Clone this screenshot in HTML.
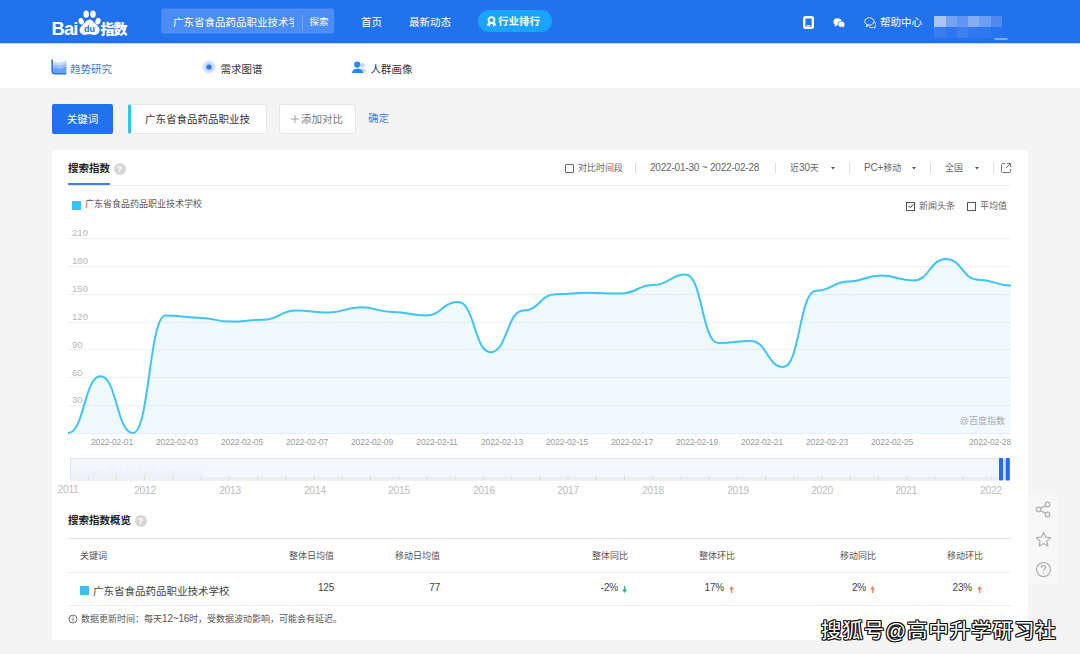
<!DOCTYPE html>
<html lang="zh-CN">
<head>
<meta charset="utf-8">
<title>百度指数</title>
<style>
*{box-sizing:border-box;margin:0;padding:0}
html,body{width:1080px;height:654px;overflow:hidden}
body{background:#f4f4f4;font-family:"Liberation Sans","Noto Sans CJK SC",sans-serif;font-size:12px;color:#333;position:relative}
.abs{position:absolute;white-space:nowrap}
#hdr{position:absolute;left:0;top:0;width:1080px;height:43px;background:#2272f0}
#sub{position:absolute;left:0;top:43px;width:1080px;height:45px;background:#fff}
.w{color:#fff}
#search{position:absolute;left:161px;top:8px;width:172px;height:25px;background:#4b8df4;border-radius:3px}
#card{position:absolute;left:52px;top:150px;width:975.500px;height:490px;background:#fff}
.t11{font-size:10.5px}
.t10{font-size:9px}
.l{font-size:10px;letter-spacing:-0.2px}
.g9{color:#999}
.g6{color:#666}
</style>
</head>
<body>
<div id="hdr">
  <div class="abs w" style="left:51.5px;top:17.5px;font-size:18.3px;font-weight:bold;letter-spacing:-0.75px;line-height:22px">Bai</div>
  <svg class="abs" style="left:77px;top:9px" width="25" height="27" viewBox="0 0 25 27">
    <ellipse cx="4.2" cy="12.2" rx="2.6" ry="3.4" fill="#fff" transform="rotate(-15 4.2 12.2)"/>
    <ellipse cx="9.2" cy="5.2" rx="2.7" ry="3.6" fill="#fff"/>
    <ellipse cx="16" cy="5.2" rx="2.7" ry="3.6" fill="#fff"/>
    <ellipse cx="21" cy="12.2" rx="2.6" ry="3.4" fill="#fff" transform="rotate(15 21 12.2)"/>
    <path d="M12.6 10.5c-2.6 0-4 2.6-6 4.6-2 2-4 3-4 6 0 3 2.400 4.800 5 4.800 2 0 3.200-.6 5-.6s3 .6 5 .6c2.600 0 5-1.800 5-4.800 0-3-2-4-4-6-2-2-3.400-4.600-6-4.600z" fill="#fff"/>
    <text x="12.600" y="23" font-size="9" font-weight="bold" fill="#2272f0" text-anchor="middle" font-family="Liberation Sans, sans-serif">du</text>
  </svg>
  <div class="abs w" style="left:100.5px;top:19.5px;font-size:14px;font-weight:900;letter-spacing:-1px;line-height:18px">指数</div>

  <svg class="abs" style="left:0;top:0" width="400" height="43"><rect x="161.200" y="8.400" width="173" height="25.300" rx="3" fill="#4b8df4"/></svg>
  <div class="abs w" style="left:173px;top:13.500px;width:121px;overflow:hidden;line-height:16px;font-size:10.5px">广东省食品药品职业技术学校</div>
  <div class="abs" style="left:302px;top:14.500px;width:1px;height:14px;background:#78a8f7"></div>
  <div class="abs w t11" style="left:309.500px;top:13.500px;line-height:16px;font-size:9.5px">探索</div>

  <div class="abs w" style="left:361px;top:14px;line-height:16px;font-size:10.5px">首页</div>
  <div class="abs w" style="left:409px;top:14px;line-height:16px;font-size:10.5px">最新动态</div>
  <div class="abs" style="left:478px;top:10px;width:74px;height:22px;border-radius:11px;background:#1aa3ff"></div>
  <svg class="abs" style="left:486px;top:16px" width="11" height="11" viewBox="0 0 10 10"><path d="M2 5.500L.6 8.800l1.700-.3.900 1.400 1.100-3zM8 5.500l1.400 3.300-1.700-.3-.9 1.400-1.100-3z" fill="#fff"/><circle cx="5" cy="3.700" r="2.700" fill="none" stroke="#fff" stroke-width="1.700"/></svg>
  <div class="abs w" style="left:498px;top:13px;line-height:16px;font-size:10.5px;font-weight:bold">行业排行</div>

  <svg class="abs" style="left:803px;top:16px" width="11" height="13" viewBox="0 0 11 13"><rect x="1.200" y="1.200" width="8.600" height="10.600" rx="1.300" fill="none" stroke="#fff" stroke-width="2.400"/><rect x="4" y="9" width="3" height="1.200" fill="#fff"/></svg>
  <svg class="abs" style="left:833px;top:17.500px" width="12.500" height="10" viewBox="0 0 15 12"><ellipse cx="5.500" cy="4.500" rx="5" ry="4.200" fill="#fff"/><ellipse cx="10" cy="7.500" rx="4.200" ry="3.600" fill="#fff" stroke="#2272f0" stroke-width=".8"/><path d="M2.500 7.500L2 10.500l3-1.800z" fill="#fff"/><path d="M12 10l1.500 1.800-.3-2.500z" fill="#fff"/></svg>
  <svg class="abs" style="left:863.500px;top:17px" width="12.500" height="11.500" viewBox="0 0 14 13"><ellipse cx="6" cy="5" rx="5.200" ry="4.200" fill="none" stroke="#fff" stroke-width="1"/><path d="M3 8.500L2.500 11l2.800-1.700" fill="none" stroke="#fff" stroke-width="1"/><path d="M11.800 5.500c1 .8 1.600 1.800 1.600 3 0 1-.5 2-1.300 2.600l.3 1.500-1.700-.8c-.6.200-1.200.3-1.800.3-1.500 0-2.800-.6-3.600-1.500" fill="none" stroke="#fff" stroke-width="1"/></svg>
  <div class="abs w" style="left:880px;top:14px;line-height:16px;font-size:10.5px">帮助中心</div>
  <div class="abs" style="left:934.30px;top:16px;width:11.4px;height:10.5px;background:#a9c5f7"></div>
  <div class="abs" style="left:945.55px;top:16px;width:11.4px;height:10.5px;background:#74a3f4"></div>
  <div class="abs" style="left:956.80px;top:16px;width:11.4px;height:10.5px;background:#6197f3"></div>
  <div class="abs" style="left:968.05px;top:16px;width:11.4px;height:10.5px;background:#82acf5"></div>
  <div class="abs" style="left:979.30px;top:16px;width:11.4px;height:10.5px;background:#6c9ef4"></div>
  <div class="abs" style="left:990.55px;top:16px;width:11.4px;height:10.5px;background:#4f8af2"></div>
  <div class="abs" style="left:934.30px;top:26.5px;width:11.4px;height:11px;background:#3b7df1"></div>
  <div class="abs" style="left:945.55px;top:26.5px;width:11.4px;height:11px;background:#2d76f0"></div>
  <div class="abs" style="left:956.80px;top:26.5px;width:11.4px;height:11px;background:#3f80f1"></div>
  <div class="abs" style="left:968.05px;top:26.5px;width:11.4px;height:11px;background:#3078f0"></div>
  <div class="abs" style="left:979.30px;top:26.5px;width:11.4px;height:11px;background:#2e77f0"></div>
  <div class="abs" style="left:990.55px;top:26.5px;width:11.4px;height:11px;background:#2874f0"></div>
  <div class="abs" style="left:994px;top:38px;width:14px;height:2px;border-radius:0 0 7px 7px;background:#7fabf5"></div>
</div>

<div id="sub">
  <div class="abs" style="left:0;top:0;width:1080px;height:1px;background:#bdd5fa"></div>
  <svg class="abs" style="left:51.100px;top:16.200px" width="16" height="16" viewBox="0 0 16 16"><path d="M2.200 3.200C5 1.600 8 4.600 11 3.100S14 1.200 15.300 .9V14H2.200z" fill="#c6dcfc"/><path d="M2.200 6.500C5 4.500 8 8 11 6.200S14 4.600 15.300 4.200V14H2.200z" fill="#98bffa"/><path d="M2.200 10C5 8 8 11.200 11 9.600S14 8 15.300 7.600V14H2.200z" fill="#6aa2f7"/><path d="M1.200 .4V12a2.800 2.800 0 0 0 2.800 2.800H15.300" fill="none" stroke="#2673f3" stroke-width="1.600"/></svg>
  <div class="abs" style="left:70px;top:18px;line-height:16px;font-size:10.5px;color:#2f7bf3">趋势研究</div>
  <svg class="abs" style="left:201px;top:16px" width="16" height="16" viewBox="0 0 16 16"><circle cx="8" cy="8" r="7" fill="#e3edfe"/><circle cx="8" cy="8" r="5" fill="#c4dafc"/><circle cx="8" cy="8" r="2.600" fill="#2878f5"/></svg>
  <div class="abs" style="left:220.400px;top:18px;line-height:16px;font-size:10.5px;color:#333">需求图谱</div>
  <svg class="abs" style="left:351px;top:18px" width="17" height="13" viewBox="0 0 17 13"><circle cx="11.500" cy="4.300" r="2.200" fill="#bdd8fc"/><path d="M9.500 7.400c3.200-.6 6.300.6 6.300 3.400h-4z" fill="#cbe0fd"/><circle cx="6.200" cy="3.600" r="3.100" fill="#2588f7"/><path d="M1 12.100c0-2.900 2.200-4.300 5.400-4.300s5.900 1.400 5.900 4.300z" fill="#2588f7"/></svg>
  <div class="abs" style="left:370.600px;top:18px;line-height:16px;font-size:10.5px;color:#333">人群画像</div>
</div>

<!-- keyword row -->
<div class="abs" style="left:52px;top:103.500px;width:61px;height:30px;background:#2272f0;border-radius:2px"></div>
<div class="abs w" style="left:52px;top:104px;width:61px;height:30px;line-height:30px;text-align:center;font-size:10.5px">关键词</div>
<div class="abs" style="left:128px;top:103.500px;width:139px;height:30px;background:#fff;border:1px solid #e8e8e8;border-left:3px solid #2fc3f5;border-radius:2px"></div>
<div class="abs" style="left:145px;top:104px;line-height:30px;font-size:10.5px;color:#333">广东省食品药品职业技</div>
<div class="abs" style="left:279px;top:103.500px;width:76.500px;height:30px;background:#fff;border:1px solid #e5e5e5;border-radius:3px"></div>
<svg class="abs" style="left:290.500px;top:115px" width="8" height="8" viewBox="0 0 8 8"><path d="M4 0v8M0 4h8" stroke="#999" stroke-width=".9"/></svg>
<div class="abs" style="left:301px;top:104px;line-height:30px;font-size:10.5px;color:#777">添加对比</div>
<div class="abs" style="left:368px;top:103px;line-height:30px;font-size:10.5px;color:#3d7ff0">确定</div>

<div id="card"></div>

<!-- card header -->
<div class="abs" style="left:68px;top:159px;line-height:18px;font-size:10.5px;font-weight:bold;color:#222">搜索指数</div>
<div class="abs" style="left:113.500px;top:163px;width:12px;height:12px;border-radius:6px;background:#d6d6d6;color:#fff;font-size:9px;line-height:12px;text-align:center;font-weight:bold">?</div>
<div class="abs" style="left:68px;top:185px;width:943px;height:1px;background:#eeeeee"></div>
<div class="abs" style="left:68px;top:183px;width:42px;height:2px;background:#3d7ff0"></div>

<div class="abs" style="left:564.500px;top:164px;width:9px;height:9px;border:1px solid #666;border-radius:1px;background:#fff"></div>
<div class="abs g6 t10" style="left:578px;top:160px;line-height:16px">对比时间段</div>
<div class="abs" style="left:635px;top:163px;width:1px;height:10px;background:#ddd"></div>
<div class="abs g6 t10" style="left:650px;top:160px;line-height:16px"><span class="l">2022-01-30 ~ 2022-02-28</span></div>
<div class="abs" style="left:775px;top:163px;width:1px;height:10px;background:#ddd"></div>
<div class="abs g6 t10" style="left:790px;top:160px;line-height:16px">近<span class="l">30</span>天</div>
<svg class="abs" style="left:831px;top:167px" width="4" height="3" viewBox="0 0 4 3"><path d="M0 0h4L2 2.600z" fill="#555"/></svg>
<div class="abs" style="left:849px;top:163px;width:1px;height:10px;background:#ddd"></div>
<div class="abs g6 t10" style="left:864px;top:160px;line-height:16px"><span class="l">PC+</span>移动</div>
<svg class="abs" style="left:912px;top:167px" width="4" height="3" viewBox="0 0 4 3"><path d="M0 0h4L2 2.600z" fill="#555"/></svg>
<div class="abs" style="left:930px;top:163px;width:1px;height:10px;background:#ddd"></div>
<div class="abs g6 t10" style="left:945px;top:160px;line-height:16px">全国</div>
<svg class="abs" style="left:975px;top:167px" width="4" height="3" viewBox="0 0 4 3"><path d="M0 0h4L2 2.600z" fill="#555"/></svg>
<div class="abs" style="left:993px;top:163px;width:1px;height:10px;background:#ddd"></div>
<svg class="abs" style="left:1000px;top:161.500px" width="12" height="12" viewBox="0 0 12 12"><path d="M5 1.500H2.500a1 1 0 0 0-1 1v7a1 1 0 0 0 1 1h7a1 1 0 0 0 1-1V7" fill="none" stroke="#777" stroke-width="1"/><path d="M7 1.500h3.500V5M10.500 1.500L6 6" fill="none" stroke="#777" stroke-width="1"/></svg>

<!-- legend -->
<div class="abs" style="left:72px;top:200.500px;width:9px;height:9px;background:#35c3f5"></div>
<div class="abs t10" style="left:85px;top:196px;line-height:16px;color:#555">广东省食品药品职业技术学校</div>
<div class="abs" style="left:906px;top:201.500px;width:9px;height:9px;border:1px solid #555;background:#fff"></div>
<svg class="abs" style="left:906.500px;top:202px" width="8" height="8" viewBox="0 0 8 8"><path d="M1.800 4l1.600 1.600L6.300 2.300" fill="none" stroke="#333" stroke-width="1"/></svg>
<div class="abs g6 t10" style="left:919px;top:198px;line-height:16px">新闻头条</div>
<div class="abs" style="left:967px;top:201.500px;width:9px;height:9px;border:1px solid #555;background:#fff"></div>
<div class="abs g6 t10" style="left:980px;top:198px;line-height:16px">平均值</div>

<!-- chart -->
<svg class="abs" style="left:0;top:0" width="1080" height="654" viewBox="0 0 1080 654">
  <g stroke="#f1f1f1" stroke-width="1" shape-rendering="crispEdges">
    <line x1="68" x2="1011" y1="238.500" y2="238.500"/>
    <line x1="68" x2="1011" y1="266.500" y2="266.500"/>
    <line x1="68" x2="1011" y1="294.500" y2="294.500"/>
    <line x1="68" x2="1011" y1="322.500" y2="322.500"/>
    <line x1="68" x2="1011" y1="349.500" y2="349.500"/>
    <line x1="68" x2="1011" y1="377.500" y2="377.500"/>
    <line x1="68" x2="1011" y1="405.500" y2="405.500"/>
    <line x1="68" x2="1011" y1="433.500" y2="433.500"/>
  </g>
  <path d="M68.00,433.00C84.26,433.00 84.26,376.30 100.52,376.30C116.78,376.30 116.78,433.00 133.03,433.00C149.29,433.00 149.29,315.50 165.55,315.50C181.81,315.50 181.81,317.70 198.07,317.70C214.33,317.70 214.33,321.60 230.59,321.60C246.84,321.60 246.84,319.80 263.10,319.80C279.36,319.80 279.36,310.40 295.62,310.40C311.88,310.40 311.88,312.40 328.14,312.40C344.40,312.40 344.40,307.30 360.66,307.30C376.91,307.30 376.91,312.00 393.17,312.00C409.43,312.00 409.43,315.60 425.69,315.60C441.95,315.60 441.95,302.00 458.21,302.00C474.47,302.00 474.47,352.30 490.72,352.30C506.98,352.30 506.98,310.60 523.24,310.60C539.50,310.60 539.50,294.30 555.76,294.30C572.02,294.30 572.02,292.80 588.28,292.80C604.53,292.80 604.53,293.50 620.79,293.50C637.05,293.50 637.05,285.00 653.31,285.00C669.57,285.00 669.57,274.50 685.83,274.50C702.09,274.50 702.09,343.00 718.34,343.00C734.60,343.00 734.60,341.00 750.86,341.00C767.12,341.00 767.12,367.00 783.38,367.00C799.64,367.00 799.64,290.80 815.90,290.80C832.16,290.80 832.16,281.50 848.41,281.50C864.67,281.50 864.67,275.60 880.93,275.60C897.19,275.60 897.19,280.50 913.45,280.50C929.71,280.50 929.71,259.00 945.97,259.00C962.22,259.00 962.22,279.80 978.48,279.80C994.74,279.80 994.74,285.40 1011.00,285.40L1011,433.5L68,433.5Z" fill="#3cc4f6" fill-opacity="0.085"/>
  <path d="M68.00,433.00C84.26,433.00 84.26,376.30 100.52,376.30C116.78,376.30 116.78,433.00 133.03,433.00C149.29,433.00 149.29,315.50 165.55,315.50C181.81,315.50 181.81,317.70 198.07,317.70C214.33,317.70 214.33,321.60 230.59,321.60C246.84,321.60 246.84,319.80 263.10,319.80C279.36,319.80 279.36,310.40 295.62,310.40C311.88,310.40 311.88,312.40 328.14,312.40C344.40,312.40 344.40,307.30 360.66,307.30C376.91,307.30 376.91,312.00 393.17,312.00C409.43,312.00 409.43,315.60 425.69,315.60C441.95,315.60 441.95,302.00 458.21,302.00C474.47,302.00 474.47,352.30 490.72,352.30C506.98,352.30 506.98,310.60 523.24,310.60C539.50,310.60 539.50,294.30 555.76,294.30C572.02,294.30 572.02,292.80 588.28,292.80C604.53,292.80 604.53,293.50 620.79,293.50C637.05,293.50 637.05,285.00 653.31,285.00C669.57,285.00 669.57,274.50 685.83,274.50C702.09,274.50 702.09,343.00 718.34,343.00C734.60,343.00 734.60,341.00 750.86,341.00C767.12,341.00 767.12,367.00 783.38,367.00C799.64,367.00 799.64,290.80 815.90,290.80C832.16,290.80 832.16,281.50 848.41,281.50C864.67,281.50 864.67,275.60 880.93,275.60C897.19,275.60 897.19,280.50 913.45,280.50C929.71,280.50 929.71,259.00 945.97,259.00C962.22,259.00 962.22,279.80 978.48,279.80C994.74,279.80 994.74,285.40 1011.00,285.40" fill="none" stroke="#3fc4f6" stroke-width="2" stroke-linejoin="round"/>
  <g font-family="Liberation Sans, sans-serif" font-size="9.6" fill="#b9b9b9">
    <text x="72" y="236">210</text>
    <text x="72" y="264">180</text>
    <text x="72" y="292">150</text>
    <text x="72" y="320">120</text>
    <text x="72" y="348">90</text>
    <text x="72" y="376">60</text>
    <text x="72" y="403">30</text>
  </g>
  <g font-family="Liberation Sans, sans-serif" font-size="8.5" letter-spacing="-0.15" fill="#9c9c9c" text-anchor="middle">
    <text x="112" y="445">2022-02-01</text>
    <text x="177" y="445">2022-02-03</text>
    <text x="242" y="445">2022-02-05</text>
    <text x="307" y="445">2022-02-07</text>
    <text x="372" y="445">2022-02-09</text>
    <text x="437" y="445">2022-02-11</text>
    <text x="502" y="445">2022-02-13</text>
    <text x="567" y="445">2022-02-15</text>
    <text x="632" y="445">2022-02-17</text>
    <text x="697" y="445">2022-02-19</text>
    <text x="762" y="445">2022-02-21</text>
    <text x="827" y="445">2022-02-23</text>
    <text x="892" y="445">2022-02-25</text>
    <text x="1011" y="445" text-anchor="end">2022-02-28</text>
  </g>
  <text x="1005" y="424" font-size="9" fill="#aaaaaa" text-anchor="end" font-family="Liberation Sans, Noto Sans CJK SC, sans-serif">@百度指数</text>

  <!-- slider -->
  <rect x="70" y="458" width="940" height="22" fill="#f3f7fd"/>
  <rect x="70" y="477" width="929" height="3.800" fill="#eeeef0"/>
  <path d="M70.500 480V458.500H1010" fill="none" stroke="#e3e8f0" stroke-width="1"/>
  
  <path d="M71,479L73,469.5L75,469.0L77,468.8L79,468.2L81,469.0L83,468.3L85,468.9L87,470.1L89,468.2L91,469.4L93,468.4L95,471.5L97,470.1L99,468.0L101,469.8L103,469.7L105,471.9L107,471.1L109,470.9L111,468.3L113,465.9L115,471.4L117,468.8L119,471.4L121,469.5L123,471.5L125,472.0L127,465.5L129,471.2L131,471.1L133,468.1L135,468.5L137,470.8L139,468.2L141,466.8L143,469.3L145,471.2L147,468.2L149,469.2L151,468.1L153,468.4L155,467.8L157,470.6L159,471.3L161,471.4L163,471.7L165,470.8L167,469.6L169,469.0L171,469.3L173,470.6L175,470.8L177,468.7L179,470.1L181,470.7L183,467.1L185,469.2L187,471.8L189,468.1L191,471.9L193,469.0L195,468.6L197,468.9L199,468.8L201,470.5L203,469.7L204,479Z" fill="#eff2f7"/>
  <rect x="1003" y="459" width="3" height="21" fill="#cfe0fb"/>
  <rect x="999" y="458" width="4" height="22.400" rx="1" fill="#1f6af0"/>
  <rect x="1005.800" y="458" width="4" height="22.400" rx="1" fill="#1f6af0"/>
  <g stroke="#dcdcdc" stroke-width="1"><line x1="88.3" x2="88.3" y1="476" y2="480"/><line x1="116.5" x2="116.5" y1="476" y2="480"/><line x1="144.7" x2="144.7" y1="476" y2="480"/><line x1="173.0" x2="173.0" y1="476" y2="480"/><line x1="201.2" x2="201.2" y1="476" y2="480"/><line x1="229.4" x2="229.4" y1="476" y2="480"/><line x1="257.6" x2="257.6" y1="476" y2="480"/><line x1="285.8" x2="285.8" y1="476" y2="480"/><line x1="314.1" x2="314.1" y1="476" y2="480"/><line x1="342.3" x2="342.3" y1="476" y2="480"/><line x1="370.5" x2="370.5" y1="476" y2="480"/><line x1="398.7" x2="398.7" y1="476" y2="480"/><line x1="426.9" x2="426.9" y1="476" y2="480"/><line x1="455.2" x2="455.2" y1="476" y2="480"/><line x1="483.4" x2="483.4" y1="476" y2="480"/><line x1="511.6" x2="511.6" y1="476" y2="480"/><line x1="539.8" x2="539.8" y1="476" y2="480"/><line x1="568.0" x2="568.0" y1="476" y2="480"/><line x1="596.3" x2="596.3" y1="476" y2="480"/><line x1="624.5" x2="624.5" y1="476" y2="480"/><line x1="652.7" x2="652.7" y1="476" y2="480"/><line x1="680.9" x2="680.9" y1="476" y2="480"/><line x1="709.1" x2="709.1" y1="476" y2="480"/><line x1="737.4" x2="737.4" y1="476" y2="480"/><line x1="765.6" x2="765.6" y1="476" y2="480"/><line x1="793.8" x2="793.8" y1="476" y2="480"/><line x1="822.0" x2="822.0" y1="476" y2="480"/><line x1="850.2" x2="850.2" y1="476" y2="480"/><line x1="878.5" x2="878.5" y1="476" y2="480"/><line x1="906.7" x2="906.7" y1="476" y2="480"/><line x1="934.9" x2="934.9" y1="476" y2="480"/><line x1="963.1" x2="963.1" y1="476" y2="480"/><line x1="991.3" x2="991.3" y1="476" y2="480"/></g>
  <g font-family="Liberation Sans, sans-serif" font-size="10.2" letter-spacing="-0.25" fill="#bcbcbc" text-anchor="middle">
    <text x="68" y="492.6">2011</text>
    <text x="145" y="493.6">2012</text>
    <text x="230" y="493.6">2013</text>
    <text x="315" y="493.6">2014</text>
    <text x="399" y="493.6">2015</text>
    <text x="484" y="493.6">2016</text>
    <text x="568" y="493.6">2017</text>
    <text x="653" y="493.6">2018</text>
    <text x="738" y="493.6">2019</text>
    <text x="822" y="493.6">2020</text>
    <text x="906" y="493.6">2021</text>
    <text x="991" y="493.6">2022</text>
  </g>
</svg>

<!-- overview -->
<div class="abs" style="left:68px;top:511px;line-height:18px;font-size:10.5px;font-weight:bold;color:#222">搜索指数概览</div>
<div class="abs" style="left:134.500px;top:515px;width:12px;height:12px;border-radius:6px;background:#d6d6d6;color:#fff;font-size:9px;line-height:12px;text-align:center;font-weight:bold">?</div>
<div class="abs" style="left:68px;top:538px;width:943px;height:1px;background:#e4e4e4"></div>
<div class="abs" style="left:68px;top:572px;width:943px;height:1px;background:#eeeeee"></div>
<div class="abs" style="left:68px;top:605px;width:943px;height:1px;background:#eeeeee"></div>

<div class="abs t10" style="left:80px;top:548px;line-height:16px;color:#555">关键词</div>
<div class="abs t10" style="left:234px;top:548px;width:100px;text-align:right;line-height:16px;color:#555">整体日均值</div>
<div class="abs t10" style="left:340px;top:548px;width:100px;text-align:right;line-height:16px;color:#555">移动日均值</div>
<div class="abs t10" style="left:528px;top:548px;width:100px;text-align:right;line-height:16px;color:#555">整体同比</div>
<div class="abs t10" style="left:635px;top:548px;width:100px;text-align:right;line-height:16px;color:#555">整体环比</div>
<div class="abs t10" style="left:776px;top:548px;width:100px;text-align:right;line-height:16px;color:#555">移动同比</div>
<div class="abs t10" style="left:883px;top:548px;width:100px;text-align:right;line-height:16px;color:#555">移动环比</div>

<div class="abs" style="left:80px;top:586px;width:9px;height:9px;background:#3cc0f2"></div>
<div class="abs" style="left:93px;top:582px;line-height:18px;font-size:10.5px;color:#444">广东省食品药品职业技术学校</div>
<div class="abs t10" style="left:234px;top:580px;width:100px;text-align:right;line-height:16px;color:#444"><span class="l">125</span></div>
<div class="abs t10" style="left:340px;top:580px;width:100px;text-align:right;line-height:16px;color:#444"><span class="l">77</span></div>
<div class="abs t10" style="left:518px;top:580px;width:100px;text-align:right;line-height:16px;color:#444"><span class="l">-2%</span></div>
<div class="abs t10" style="left:624px;top:580px;width:100px;text-align:right;line-height:16px;color:#444"><span class="l">17%</span></div>
<div class="abs t10" style="left:766px;top:580px;width:100px;text-align:right;line-height:16px;color:#444"><span class="l">2%</span></div>
<div class="abs t10" style="left:872px;top:580px;width:100px;text-align:right;line-height:16px;color:#444"><span class="l">23%</span></div>
<svg class="abs" style="left:621.5px;top:585.5px" width="5.300" height="7" viewBox="0 0 6 8"><path d="M2.200 0h1.600v4H6L3 8 0 4h2.200z" fill="#2cb58f"/></svg>
<svg class="abs" style="left:728.5px;top:585.5px" width="5.300" height="7" viewBox="0 0 6 8"><path d="M2.200 8h1.600V4H6L3 0 0 4h2.200z" fill="#f7825e"/></svg>
<svg class="abs" style="left:869.5px;top:585.5px" width="5.300" height="7" viewBox="0 0 6 8"><path d="M2.200 8h1.600V4H6L3 0 0 4h2.200z" fill="#f7825e"/></svg>
<svg class="abs" style="left:976.5px;top:585.5px" width="5.300" height="7" viewBox="0 0 6 8"><path d="M2.200 8h1.600V4H6L3 0 0 4h2.200z" fill="#f7825e"/></svg>

<svg class="abs" style="left:68px;top:614px" width="10" height="10" viewBox="0 0 10 10"><circle cx="5" cy="5" r="4" fill="none" stroke="#666" stroke-width=".9"/><path d="M5 4.300v3M5 2.600v1" stroke="#666" stroke-width="1"/></svg>
<div class="abs t10" style="left:81px;top:611px;line-height:16px;color:#555">数据更新时间：每天<span class="l">12~16</span>时，受数据波动影响，可能会有延迟。</div>

<!-- right float -->
<div class="abs" style="left:1028px;top:495px;width:30px;height:89px;background:#f8f8f8"></div>
<svg class="abs" style="left:1034.500px;top:501px" width="17" height="17" viewBox="0 0 17 17"><g fill="none" stroke="#b0b0b0" stroke-width="1.250"><circle cx="3.500" cy="8.500" r="2.300"/><circle cx="12.500" cy="3.500" r="2.300"/><circle cx="12.500" cy="13.500" r="2.300"/><path d="M5.500 7.400l5-2.800M5.500 9.600l5 2.800"/></g></svg>
<svg class="abs" style="left:1034.500px;top:531px" width="17" height="17" viewBox="0 0 17 17"><path d="M8.500 1.500l2.100 4.600 5 .6-3.700 3.400 1 4.900-4.400-2.500-4.400 2.500 1-4.900L1.400 6.700l5-.6z" fill="none" stroke="#b0b0b0" stroke-width="1.250" stroke-linejoin="round"/></svg>
<svg class="abs" style="left:1034.500px;top:561px" width="17" height="17" viewBox="0 0 17 17"><circle cx="8.500" cy="8.500" r="7" fill="none" stroke="#b0b0b0" stroke-width="1.250"/><path d="M6.300 6.800c0-1.400 1-2.200 2.200-2.200s2.200.8 2.200 2c0 1.600-2.200 1.700-2.200 3.400M8.500 11.500v1.300" fill="none" stroke="#b0b0b0" stroke-width="1.250"/></svg>

<!-- watermark -->
<div class="abs" id="wm" style="left:821px;top:617px;line-height:28px;font-size:20.500px;color:#fff;letter-spacing:0.900px;text-shadow:-1px -1px 0 #111,1px -1px 0 #111,-1px 1px 0 #111,1px 1px 0 #111,0 -1px 0 #111,0 1px 0 #111,-1px 0 0 #111,1px 0 0 #111">搜狐号@高中升学研习社</div>
</body>
</html>
